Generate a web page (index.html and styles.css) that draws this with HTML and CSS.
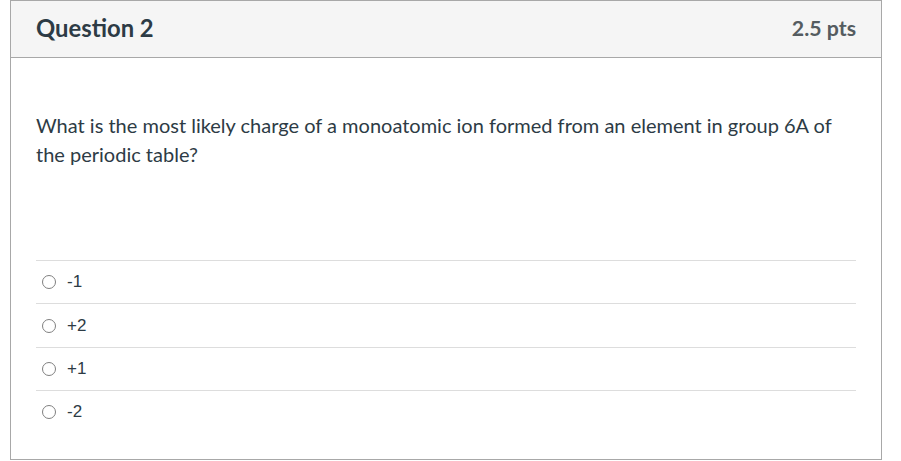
FILE: index.html
```html
<!DOCTYPE html>
<html>
<head>
<meta charset="utf-8">
<link rel="stylesheet" href="styles.css">
</head>
<body>
<div class="card">
  <div class="header">
    <span class="title">Question 2</span>
    <span class="pts">2.5 pts</span>
  </div>
  <div class="body">
    <p class="question">What is the most likely charge of a monoatomic ion formed from an element in group 6A of the periodic table?</p>
    <div class="answers">
      <div class="answer"><span class="radio"></span><span class="label">-1</span></div>
      <div class="answer"><span class="radio"></span><span class="label">+2</span></div>
      <div class="answer"><span class="radio"></span><span class="label">+1</span></div>
      <div class="answer"><span class="radio"></span><span class="label">-2</span></div>
    </div>
  </div>
</div>
</body>
</html>
```
FILE: styles.css
```css
* { box-sizing: border-box; }
body {
  margin: 0;
  padding: 0 19px 1px 10px;
  background: #fff;
  font-family: Lato, "Liberation Sans", sans-serif;
  color: #2d3b45;
}
.card {
  border: 1px solid #a8a8a8;
  height: 460px;
  width: 872px;
}
.header {
  height: 57px;
  background: #f5f5f5;
  border-bottom: 1px solid #a8a8a8;
  display: flex;
  justify-content: space-between;
  align-items: center;
  padding: 0 25px 3px 25px;
}
.title {
  font-weight: 700;
  font-size: 23.8px;
  color: #2d3b45;
}
.pts {
  font-weight: 700;
  font-size: 21.3px;
  color: #555c60;
}
.body {
  padding: 0 25px;
}
.question {
  margin: 53px 15px 0 0;
  font-size: 20px;
  line-height: 29px;
  color: #2d3b45;
}
.answers {
  margin-top: 91px;
}
.answer {
  border-top: 1px solid #dddddd;
  height: 43.4px;
  display: flex;
  align-items: center;
  padding-left: 6px;
  font-family: "Liberation Sans", Arial, sans-serif;
  font-size: 17px;
  color: #2d3b45;
}
.radio {
  width: 14px;
  height: 14px;
  border: 1px solid #808080;
  border-radius: 50%;
  margin-right: 11px;
  flex: none;
}
```
